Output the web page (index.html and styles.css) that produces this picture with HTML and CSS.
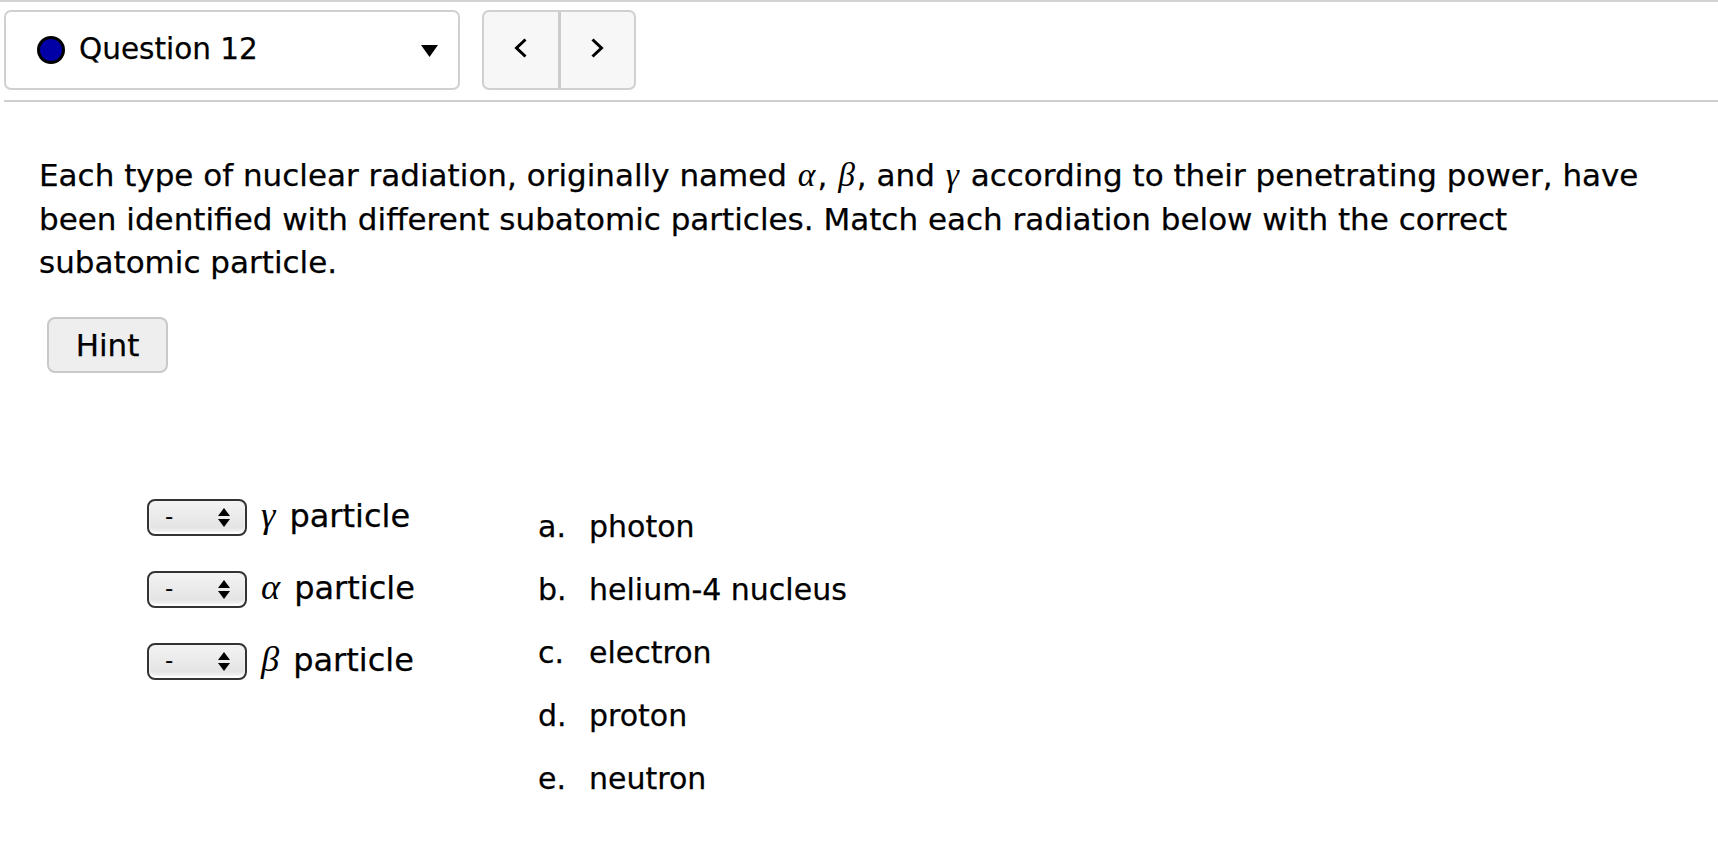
FILE: index.html
```html
<!DOCTYPE html>
<html lang="en">
<head>
<meta charset="utf-8">
<title>Question 12</title>
<link rel="stylesheet" href="styles.css">
</head>
<body>
<div class="page">
  <div class="toolbar">
    <div class="qselect">
      <div class="qselect-label">
        <span class="status-dot"></span>
        <span class="qselect-text">Question 12</span>
      </div>
      <svg class="caret" width="17" height="12" viewBox="0 0 17 12"><polygon points="0,0 17,0 8.5,12" fill="#000"/></svg>
    </div>
    <div class="nav">
      <button class="nav-btn nav-prev" type="button" aria-label="Previous">
        <svg width="16" height="20" viewBox="0 0 16 20"><polyline points="12.5,1.5 3.5,10 12.5,18.5" fill="none" stroke="#000" stroke-width="3"/></svg>
      </button>
      <button class="nav-btn nav-next" type="button" aria-label="Next">
        <svg width="16" height="20" viewBox="0 0 16 20"><polyline points="3.5,1.5 12.5,10 3.5,18.5" fill="none" stroke="#000" stroke-width="3"/></svg>
      </button>
    </div>
  </div>

  <div class="question">
    <p class="prompt">Each type of nuclear radiation, originally named <span class="math">α</span>, <span class="math">β</span>, and <span class="math">γ</span> according to their penetrating power, have been identified with different subatomic particles. Match each radiation below with the correct subatomic particle.</p>

    <button class="hint" type="button">Hint</button>

    <div class="match">
      <div class="match-left">
        <div class="match-row">
          <div class="sel"><span class="sel-val">-</span><svg class="sel-arrows" width="12" height="20" viewBox="0 0 12 20"><polygon points="6,0 12,8 0,8" fill="#000"/><polygon points="0,11 12,11 6,19" fill="#000"/></svg></div>
          <span class="match-label"><span class="math">γ</span>particle</span>
        </div>
        <div class="match-row">
          <div class="sel"><span class="sel-val">-</span><svg class="sel-arrows" width="12" height="20" viewBox="0 0 12 20"><polygon points="6,0 12,8 0,8" fill="#000"/><polygon points="0,11 12,11 6,19" fill="#000"/></svg></div>
          <span class="match-label"><span class="math">α</span>particle</span>
        </div>
        <div class="match-row">
          <div class="sel"><span class="sel-val">-</span><svg class="sel-arrows" width="12" height="20" viewBox="0 0 12 20"><polygon points="6,0 12,8 0,8" fill="#000"/><polygon points="0,11 12,11 6,19" fill="#000"/></svg></div>
          <span class="match-label"><span class="math">β</span>particle</span>
        </div>
      </div>
      <ol class="answers">
        <li><span class="ans-key">a.</span><span>photon</span></li>
        <li><span class="ans-key">b.</span><span>helium-4 nucleus</span></li>
        <li><span class="ans-key">c.</span><span>electron</span></li>
        <li><span class="ans-key">d.</span><span>proton</span></li>
        <li><span class="ans-key">e.</span><span>neutron</span></li>
      </ol>
    </div>
  </div>
</div>
</body>
</html>
```
FILE: styles.css
```css
html, body {
  margin: 0;
  padding: 0;
  background: #fff;
}
body {
  font-family: "DejaVu Sans", Verdana, sans-serif;
  color: #000;
}
.page {
  border-top: 2px solid #d2d2d2;
}
.toolbar {
  margin-left: 4px;
  padding: 8px 0 10px;
  border-bottom: 2px solid #cfcfcf;
  display: flex;
  gap: 22px;
}
.qselect {
  box-sizing: border-box;
  width: 456px;
  height: 80px;
  border: 2px solid #d0d0d0;
  border-radius: 7px;
  background: #fff;
  display: flex;
  align-items: center;
  justify-content: space-between;
  padding: 0 20px 0 31px;
}
.qselect-label {
  display: flex;
  align-items: center;
  gap: 14px;
}
.status-dot {
  box-sizing: border-box;
  width: 28px;
  height: 28px;
  border-radius: 50%;
  border: 3px solid #000;
  background: #0000a6;
  margin-top: -1px;
}
.qselect-text {
  font-size: 29.5px;
  margin-top: -2px;
  -webkit-text-stroke: 0.25px #000;
}
.caret {
  display: block;
  margin-top: 2px;
}
.nav {
  box-sizing: border-box;
  width: 154px;
  height: 80px;
  border: 2px solid #d0d0d0;
  border-radius: 7px;
  background: #f7f7f7;
  display: flex;
  overflow: hidden;
}
.nav-btn {
  flex: 1;
  border: 0;
  background: transparent;
  padding: 0;
  margin: 0;
  display: flex;
  align-items: center;
  justify-content: center;
}
.nav-btn svg { display: block; margin-top: -4px; }
.nav-prev {
  border-right: 3px solid #cccccc;
}
.question {
  padding: 0 39px;
}
.prompt {
  margin: 51px 0 0;
  max-width: 1625px;
  font-size: 31px;
  line-height: 43.5px;
  -webkit-text-stroke: 0.25px #000;
}
.math {
  font-family: "Liberation Serif", "DejaVu Serif", serif;
  font-style: italic;
  font-size: 1.08em;
  padding: 0 2px 0 1px;
  -webkit-text-stroke: 0;
}
.hint {
  display: block;
  box-sizing: border-box;
  margin: 32px 0 0 8px;
  width: 121px;
  height: 56px;
  border: 2px solid #c9c9c9;
  border-radius: 8px;
  background: #eeeeee;
  font-family: "DejaVu Sans", Verdana, sans-serif;
  font-size: 31px;
  color: #000;
  padding: 0;
  -webkit-text-stroke: 0.25px #000;
}
.match {
  margin: 109px 0 0 108px;
  display: grid;
  grid-template-columns: 391px auto;
  align-items: start;
  -webkit-text-stroke: 0.25px #000;
}
.match-row {
  height: 72px;
  display: flex;
  align-items: center;
  gap: 14px;
}
.sel {
  box-sizing: border-box;
  width: 100px;
  height: 37px;
  border: 2px solid #333;
  border-radius: 8px;
  background: linear-gradient(to bottom, #f3f3f3 0%, #e9e9e9 55%, #e4e4e4 80%, #f6f6f6 100%);
  display: flex;
  align-items: center;
  padding: 0 15px 0 16px;
  justify-content: space-between;
  box-shadow: inset 0 -2px 2px rgba(255,255,255,0.9);
  -webkit-text-stroke: 0;
}
.sel-val {
  font-size: 23px;
  line-height: 1;
  margin-top: -2px;
}
.sel-arrows { display: block; }
.match-label {
  font-size: 32px;
  margin-bottom: 7px;
}
.match-label .math {
  font-size: 1.14em;
  padding: 0 14px 0 0;
}
.answers {
  list-style: none;
  margin: 13px 0 0;
  padding: 0;
  font-size: 30px;
  line-height: 63px;
}
.answers li {
  display: flex;
}
.ans-key {
  width: 51px;
  flex: none;
}
```
